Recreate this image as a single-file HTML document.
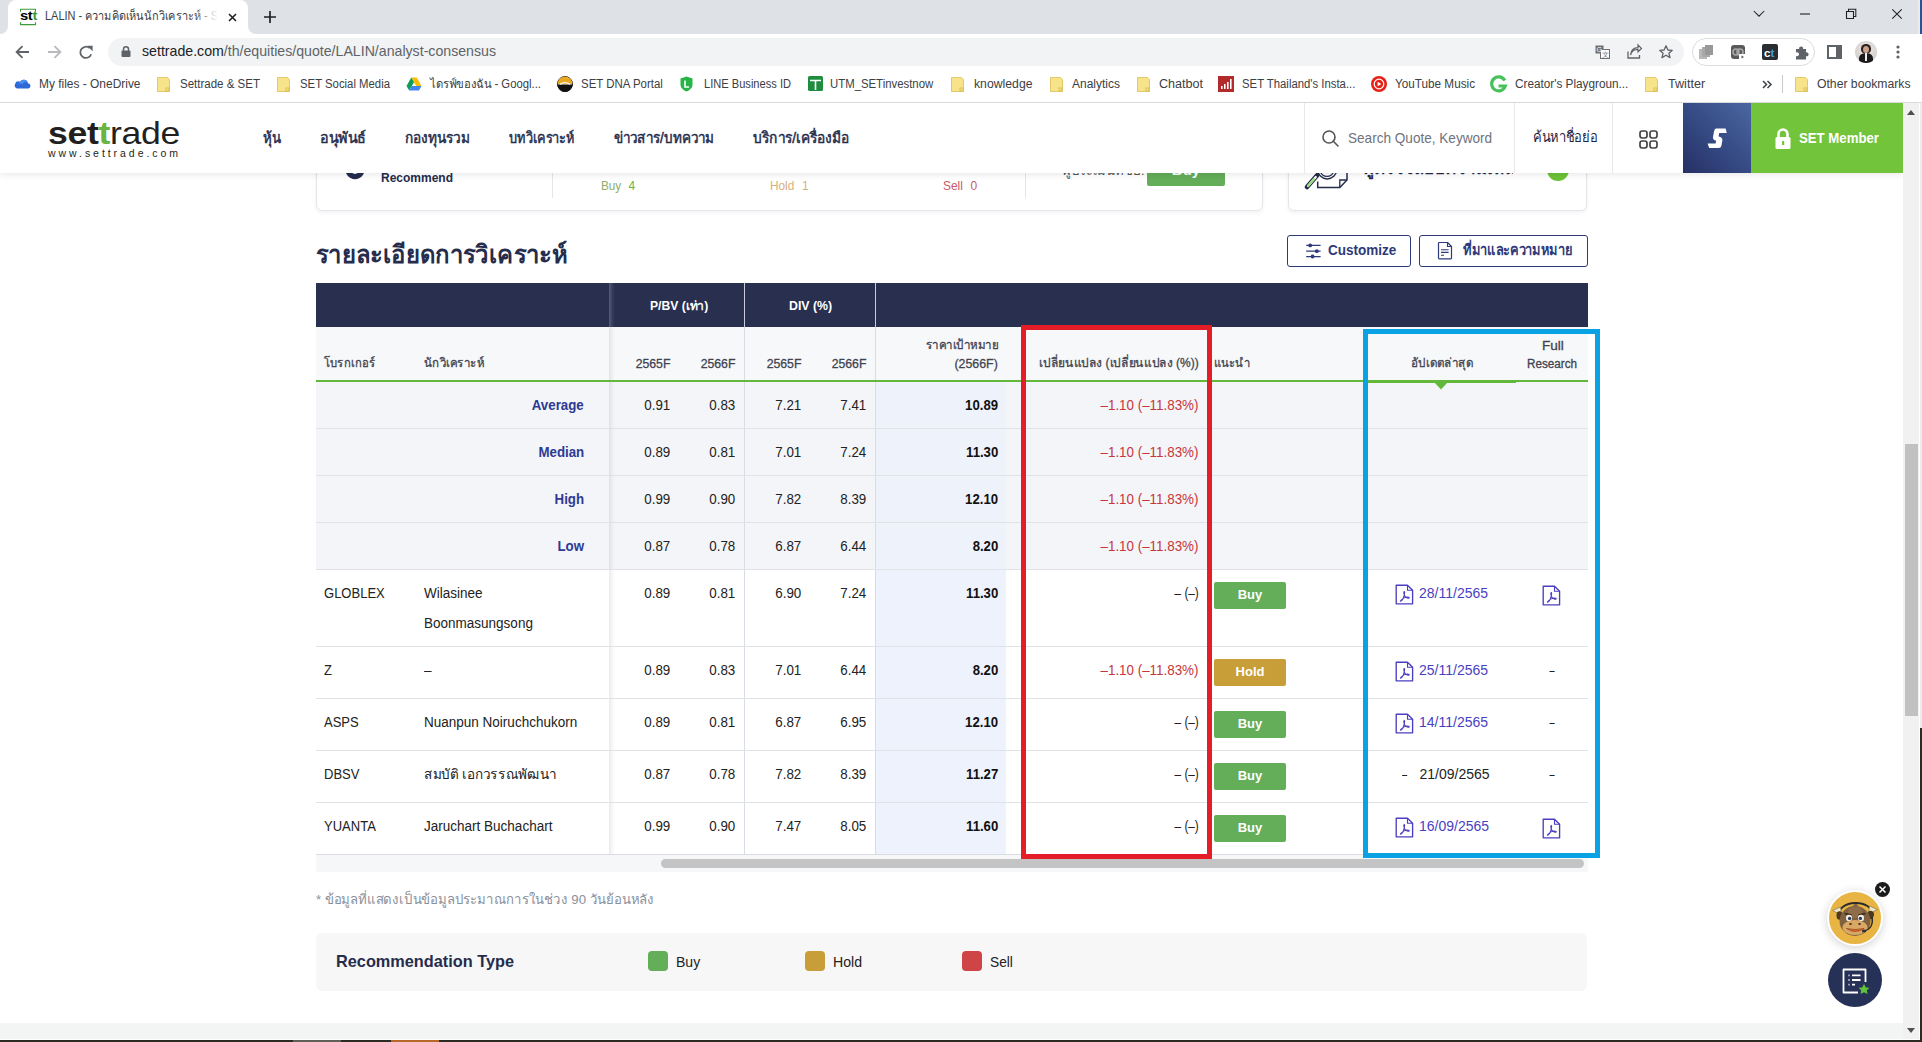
<!DOCTYPE html>
<html><head><meta charset="utf-8">
<style>
*{box-sizing:border-box;margin:0;padding:0}
html,body{width:1922px;height:1042px;overflow:hidden;background:#fff;font-family:"Liberation Sans",sans-serif;}
body{position:relative}
.a{position:absolute;white-space:nowrap}
svg.a{overflow:visible}
</style></head><body>
<div class="a" style="left:0px;top:0px;width:1922px;height:34px;background:#dee1e6;"></div><div class="a" style="left:0px;top:26px;width:8px;height:8px;background:#fff;"></div><div class="a" style="left:-8px;top:18px;width:16px;height:16px;background:#dee1e6;border-radius:50%"></div><div class="a" style="left:248px;top:26px;width:8px;height:8px;background:#fff;"></div><div class="a" style="left:248px;top:18px;width:16px;height:16px;background:#dee1e6;border-radius:50%"></div><div class="a" style="left:8px;top:0px;width:240px;height:34px;background:#fff;border-radius:8px 8px 0 0"></div><svg class="a" style="left:19px;top:8px;" width="18" height="18" viewBox="0 0 18 18"><path d="M1.5 3.8V1.3H16.5V3.8M1.5 14.2V16.6H16.5V14.2" fill="none" stroke="#3d9a35" stroke-width="1.1" stroke-linejoin="round"/></svg><div class="a " style="top:8.86px;font-size:12.5px;line-height:15.62px;color:#000;font-weight:bold;left:19.8px;transform:scaleX(1.1813);transform-origin:left center;letter-spacing:-0.3px"><span style="color:#000">st</span><span style="color:#3d9a35">t</span></div><div class="a" style="left:44px;top:0;width:174px;height:34px;overflow:hidden"><div class="a " style="top:9.36px;font-size:12.5px;line-height:15.62px;color:#3c4043;font-weight:normal;left:0.5px;transform:scaleX(0.8768);transform-origin:left center;">LALIN - ความคิดเห็นนักวิเคราะห์ - SET</div><div class="a" style="left:150px;top:0px;width:24px;height:34px;background:linear-gradient(90deg,rgba(255,255,255,0),#fff);"></div></div><svg class="a" style="left:228px;top:13px;" width="9" height="9" viewBox="0 0 9 9"><path d="M1 1L8 8M8 1L1 8" stroke="#202124" stroke-width="1.6"/></svg><svg class="a" style="left:264px;top:11px;" width="12" height="12" viewBox="0 0 12 12"><path d="M6 0V12M0 6H12" stroke="#202124" stroke-width="1.7"/></svg><svg class="a" style="left:1753px;top:10px;" width="12" height="8" viewBox="0 0 12 8"><path d="M0.8 1L6 6.2L11.2 1" fill="none" stroke="#202124" stroke-width="1.05"/></svg><svg class="a" style="left:1800px;top:13px;" width="10" height="2" viewBox="0 0 10 2"><path d="M0 1H10" stroke="#202124" stroke-width="1.1"/></svg><svg class="a" style="left:1845px;top:8px;" width="12" height="12" viewBox="0 0 12 12"><path d="M1.5 3.5H8.5V10.5H1.5Z" fill="none" stroke="#202124" stroke-width="1.1"/><path d="M3.5 3.2V1.2H10.8V8.5H8.8" fill="none" stroke="#202124" stroke-width="1.05"/></svg><svg class="a" style="left:1892px;top:9px;" width="10" height="10" viewBox="0 0 10 10"><path d="M0.3 0.3L9.7 9.7M9.7 0.3L0.3 9.7" stroke="#202124" stroke-width="1.05"/></svg><div class="a" style="left:1918px;top:0px;width:2px;height:34px;background:#ecebea;"></div><div class="a" style="left:1920px;top:0px;width:2px;height:34px;background:#24549c;"></div><div class="a" style="left:0px;top:34px;width:1922px;height:34px;background:#fff;"></div><svg class="a" style="left:15px;top:45px;" width="15" height="14" viewBox="0 0 15 14"><path d="M14 7H2M7.5 1.2L1.6 7L7.5 12.8" fill="none" stroke="#5f6368" stroke-width="1.8"/></svg><svg class="a" style="left:47px;top:45px;" width="15" height="14" viewBox="0 0 15 14"><path d="M1 7H13M7.5 1.2L13.4 7L7.5 12.8" fill="none" stroke="#b8babd" stroke-width="1.8"/></svg><svg class="a" style="left:79px;top:45px;" width="15" height="15" viewBox="0 0 15 15"><path d="M12.2 9.2A5.6 5.6 0 1 1 10.6 3.1" fill="none" stroke="#5f6368" stroke-width="1.8"/><path d="M8.2 0.8H13.6V6.2Z" fill="#5f6368"/></svg><div class="a" style="left:108px;top:38px;width:1576px;height:28px;background:#f1f3f4;border-radius:14px"></div><svg class="a" style="left:121px;top:46px;" width="10" height="11" viewBox="0 0 10 11"><rect x="0.5" y="4.5" width="9" height="6.5" rx="1" fill="#5f6368"/><path d="M2.5 5V3.3A2.5 2.5 0 0 1 7.5 3.3V5" fill="none" stroke="#5f6368" stroke-width="1.5"/></svg><div class="a " style="top:43.44px;font-size:14.16px;line-height:17.7px;color:#5f6368;font-weight:normal;left:142px;transform:scaleX(0.9997);transform-origin:left center;"><span style="color:#202124">settrade.com</span>/th/equities/quote/LALIN/analyst-consensus</div><svg class="a" style="left:1595px;top:45px;" width="15" height="14" viewBox="0 0 15 14"><rect x="0.5" y="0.5" width="8" height="8" fill="#6d7175"/><rect x="5.5" y="4.5" width="9" height="9" fill="#fff" stroke="#6d7175"/><text x="1.6" y="7.3" font-size="7" fill="#fff" font-family="Liberation Sans">G</text><text x="7.2" y="12" font-size="7" fill="#6d7175" font-family="Liberation Sans">文</text></svg><svg class="a" style="left:1627px;top:45px;" width="15" height="14" viewBox="0 0 15 14"><path d="M1 6.5V13H12.5V10" fill="none" stroke="#5f6368" stroke-width="1.3"/><path d="M3.5 10C4.5 6 8 4.3 11 4.3V6.8L14.5 3.4L11 0V2.6C7 2.6 4 5.5 3.5 10Z" fill="none" stroke="#5f6368" stroke-width="1.2"/></svg><svg class="a" style="left:1659px;top:45px;" width="14" height="14" viewBox="0 0 14 14"><path d="M7 0.8L8.9 5L13.3 5.3L9.9 8.2L11 12.6L7 10.2L3 12.6L4.1 8.2L0.7 5.3L5.1 5Z" fill="none" stroke="#5f6368" stroke-width="1.3" stroke-linejoin="round"/></svg><div class="a" style="left:1692px;top:38px;width:123px;height:28px;background:#fff;border:1px solid #dadce0;border-radius:14px"></div><svg class="a" style="left:1699px;top:45px;" width="14" height="14" viewBox="0 0 14 14"><rect x="0" y="4" width="8" height="10" fill="#b9b9b9"/><rect x="3" y="2" width="8" height="10" fill="#a9a9a9"/><rect x="6" y="0" width="8" height="10" fill="#999"/></svg><svg class="a" style="left:1731px;top:45px;" width="15" height="15" viewBox="0 0 15 15"><rect x="0" y="0" width="14" height="14" rx="3" fill="#5a5a5a"/><circle cx="5" cy="7" r="3" fill="none" stroke="#aaa" stroke-width="1.5"/><circle cx="9" cy="7" r="3" fill="none" stroke="#aaa" stroke-width="1.5"/><rect x="8" y="9" width="7" height="6" rx="1" fill="#fff"/><path d="M10.5 10.5L13 12L10.5 13.5Z" fill="#555"/></svg><div class="a" style="left:1762px;top:44px;width:16px;height:16px;background:#2a2e33;border-radius:2px"></div><div class="a " style="top:45.83px;font-size:11.5px;line-height:14.38px;color:#fff;font-weight:bold;left:1764px;">c<span style="color:#3aa0e0">t</span></div><svg class="a" style="left:1794px;top:45px;" width="16" height="15" viewBox="0 0 16 15"><path d="M2 4H5.2A2 2 0 1 1 9 4H12V7.4A2 2 0 1 1 12 11.2V14.5H2V11A2 2 0 1 0 2 7.6Z" fill="#5f6368"/></svg><svg class="a" style="left:1827px;top:45px;" width="15" height="14" viewBox="0 0 15 14"><rect x="1" y="1" width="13" height="12" fill="none" stroke="#5f6368" stroke-width="2"/><rect x="9" y="1" width="5" height="12" fill="#5f6368"/></svg><div class="a" style="left:1855px;top:41px;width:22px;height:22px;border-radius:50%;background:radial-gradient(circle at 50% 40%,#f0ebe8 0,#d9d4d1 60%,#c9c4c2 100%);overflow:hidden"><div style="position:absolute;left:6px;top:3px;width:10px;height:9px;border-radius:50% 50% 40% 40%;background:#2a211c"></div><div style="position:absolute;left:8px;top:5px;width:6px;height:7px;border-radius:50%;background:#caa28a"></div><div style="position:absolute;left:4px;top:12px;width:14px;height:12px;border-radius:45% 45% 0 0;background:#1c1a1a"></div><div style="position:absolute;left:10px;top:12px;width:2px;height:8px;background:#eee"></div></div><svg class="a" style="left:1896px;top:45px;" width="4" height="14" viewBox="0 0 4 14"><circle cx="2" cy="2" r="1.6" fill="#5f6368"/><circle cx="2" cy="7" r="1.6" fill="#5f6368"/><circle cx="2" cy="12" r="1.6" fill="#5f6368"/></svg><div class="a" style="left:0px;top:68px;width:1922px;height:34px;background:#fff;"></div><div class="a" style="left:0px;top:102px;width:1922px;height:1px;background:#d9dbdf;"></div><svg class="a" style="left:13px;top:78px;" width="18" height="11" viewBox="0 0 18 11"><path d="M4 10.5H15.5A2.7 2.7 0 0 0 15 5.2A4.4 4.4 0 0 0 7 3.8A3.4 3.4 0 0 0 4 10.5Z" fill="#2d6ad8"/><path d="M7 3.8A4.4 4.4 0 0 1 15 5.2A3 3 0 0 0 9.5 6.5A3.5 3.5 0 0 0 4.2 7Z" fill="#4d8ff0"/></svg><div class="a " style="top:76.84px;font-size:12px;line-height:15.0px;color:#3c4043;font-weight:normal;left:38.5px;transform:scaleX(0.9948);transform-origin:left center;">My files - OneDrive</div><svg class="a" style="left:157px;top:77px;" width="13" height="15" viewBox="0 0 13 15"><path d="M0.5 0.5H10.5L12.5 2.5V14.5H0.5Z" fill="#f6e38a" stroke="#e3c96a" stroke-width="1"/><rect x="9" y="11" width="3" height="3" fill="none" stroke="#d8b949" stroke-width="0.8"/></svg><div class="a " style="top:76.84px;font-size:12px;line-height:15.0px;color:#3c4043;font-weight:normal;left:180px;transform:scaleX(0.9595);transform-origin:left center;">Settrade &amp; SET</div><svg class="a" style="left:277px;top:77px;" width="13" height="15" viewBox="0 0 13 15"><path d="M0.5 0.5H10.5L12.5 2.5V14.5H0.5Z" fill="#f6e38a" stroke="#e3c96a" stroke-width="1"/><rect x="9" y="11" width="3" height="3" fill="none" stroke="#d8b949" stroke-width="0.8"/></svg><div class="a " style="top:76.84px;font-size:12px;line-height:15.0px;color:#3c4043;font-weight:normal;left:300px;transform:scaleX(0.9458);transform-origin:left center;">SET Social Media</div><svg class="a" style="left:406px;top:77px;" width="16" height="14" viewBox="0 0 16 14"><path d="M5.3 0.5H10.7L15.5 9H10.2Z" fill="#fbbc04"/><path d="M5.3 0.5L0.5 9L3.2 13.5L8 5.2Z" fill="#0f9d58"/><path d="M3.2 13.5H13L15.5 9H5.7Z" fill="#4285f4"/></svg><div class="a " style="top:76.84px;font-size:12px;line-height:15.0px;color:#3c4043;font-weight:normal;left:430px;transform:scaleX(0.9432);transform-origin:left center;">ไดรฟ์ของฉัน - Googl...</div><svg class="a" style="left:557px;top:76px;" width="16" height="16" viewBox="0 0 16 16"><circle cx="8" cy="8" r="7.5" fill="#fff" stroke="#111" stroke-width="1"/><path d="M0.5 8A7.5 7.5 0 0 1 15.5 8Z" fill="#e9a824"/><path d="M0.5 8.5H15.5A7.5 7.5 0 0 1 0.5 8.5Z" fill="#111"/><path d="M3 8.2Q8 5 13 8.2" fill="none" stroke="#fff" stroke-width="1.2"/></svg><div class="a " style="top:76.84px;font-size:12px;line-height:15.0px;color:#3c4043;font-weight:normal;left:581.2px;transform:scaleX(0.9532);transform-origin:left center;">SET DNA Portal</div><svg class="a" style="left:680px;top:76px;" width="13" height="16" viewBox="0 0 13 16"><path d="M6.5 0.5L12.5 2.5V8.5C12.5 12 9.5 14.3 6.5 15.5C3.5 14.3 0.5 12 0.5 8.5V2.5Z" fill="#28b446"/><path d="M5 4.5V11H9" fill="none" stroke="#fff" stroke-width="1.6"/></svg><div class="a " style="top:76.84px;font-size:12px;line-height:15.0px;color:#3c4043;font-weight:normal;left:703.5px;transform:scaleX(0.9251);transform-origin:left center;">LINE Business ID</div><svg class="a" style="left:808px;top:76px;" width="15" height="15" viewBox="0 0 15 15"><rect x="0" y="0" width="15" height="15" rx="1.5" fill="#1e8e3e"/><path d="M2 4.5H13M7.5 4.5V14" stroke="#fff" stroke-width="1.6"/></svg><div class="a " style="top:76.84px;font-size:12px;line-height:15.0px;color:#3c4043;font-weight:normal;left:830.3px;transform:scaleX(0.9475);transform-origin:left center;">UTM_SETinvestnow</div><svg class="a" style="left:951px;top:77px;" width="13" height="15" viewBox="0 0 13 15"><path d="M0.5 0.5H10.5L12.5 2.5V14.5H0.5Z" fill="#f6e38a" stroke="#e3c96a" stroke-width="1"/><rect x="9" y="11" width="3" height="3" fill="none" stroke="#d8b949" stroke-width="0.8"/></svg><div class="a " style="top:76.84px;font-size:12px;line-height:15.0px;color:#3c4043;font-weight:normal;left:973.5px;transform:scaleX(1.0196);transform-origin:left center;">knowledge</div><svg class="a" style="left:1050px;top:77px;" width="13" height="15" viewBox="0 0 13 15"><path d="M0.5 0.5H10.5L12.5 2.5V14.5H0.5Z" fill="#f6e38a" stroke="#e3c96a" stroke-width="1"/><rect x="9" y="11" width="3" height="3" fill="none" stroke="#d8b949" stroke-width="0.8"/></svg><div class="a " style="top:76.84px;font-size:12px;line-height:15.0px;color:#3c4043;font-weight:normal;left:1072px;transform:scaleX(0.9993);transform-origin:left center;">Analytics</div><svg class="a" style="left:1137px;top:77px;" width="13" height="15" viewBox="0 0 13 15"><path d="M0.5 0.5H10.5L12.5 2.5V14.5H0.5Z" fill="#f6e38a" stroke="#e3c96a" stroke-width="1"/><rect x="9" y="11" width="3" height="3" fill="none" stroke="#d8b949" stroke-width="0.8"/></svg><div class="a " style="top:76.84px;font-size:12px;line-height:15.0px;color:#3c4043;font-weight:normal;left:1159px;transform:scaleX(1.0468);transform-origin:left center;">Chatbot</div><svg class="a" style="left:1218px;top:76px;" width="16" height="16" viewBox="0 0 16 16"><rect x="0" y="0" width="16" height="16" fill="#b22a2a"/><rect x="3" y="10" width="1.6" height="3" fill="#fff"/><rect x="6" y="8" width="1.6" height="5" fill="#fff"/><rect x="9" y="6" width="1.6" height="7" fill="#fff"/><rect x="12" y="3" width="1.6" height="10" fill="#fff"/></svg><div class="a " style="top:76.84px;font-size:12px;line-height:15.0px;color:#3c4043;font-weight:normal;left:1242px;transform:scaleX(0.9456);transform-origin:left center;">SET Thailand's Insta...</div><svg class="a" style="left:1371px;top:76px;" width="16" height="16" viewBox="0 0 16 16"><circle cx="8" cy="8" r="8" fill="#e62117"/><circle cx="8" cy="8" r="4.8" fill="none" stroke="#fff" stroke-width="1.2"/><path d="M6.6 5.8L10.4 8L6.6 10.2Z" fill="#fff"/></svg><div class="a " style="top:76.84px;font-size:12px;line-height:15.0px;color:#3c4043;font-weight:normal;left:1395px;transform:scaleX(0.9777);transform-origin:left center;">YouTube Music</div><svg class="a" style="left:1490px;top:76px;" width="17" height="17" viewBox="0 0 17 17"><path d="M14.8 4.5A7 7 0 1 0 15.3 10H8.5" fill="none" stroke="#47c25a" stroke-width="3.2"/></svg><div class="a " style="top:76.84px;font-size:12px;line-height:15.0px;color:#3c4043;font-weight:normal;left:1514.6px;transform:scaleX(0.9802);transform-origin:left center;">Creator's Playgroun...</div><svg class="a" style="left:1645px;top:77px;" width="13" height="15" viewBox="0 0 13 15"><path d="M0.5 0.5H10.5L12.5 2.5V14.5H0.5Z" fill="#f6e38a" stroke="#e3c96a" stroke-width="1"/><rect x="9" y="11" width="3" height="3" fill="none" stroke="#d8b949" stroke-width="0.8"/></svg><div class="a " style="top:76.84px;font-size:12px;line-height:15.0px;color:#3c4043;font-weight:normal;left:1667.7px;transform:scaleX(1.0497);transform-origin:left center;">Twitter</div><svg class="a" style="left:1762px;top:80px;" width="10" height="9" viewBox="0 0 10 9"><path d="M1 1L4.5 4.5L1 8M5.5 1L9 4.5L5.5 8" fill="none" stroke="#3c4043" stroke-width="1.5"/></svg><div class="a" style="left:1782px;top:75px;width:1px;height:18px;background:#c7c9cc;"></div><svg class="a" style="left:1795px;top:77px;" width="13" height="15" viewBox="0 0 13 15"><path d="M0.5 0.5H10.5L12.5 2.5V14.5H0.5Z" fill="#f6e38a" stroke="#e3c96a" stroke-width="1"/><rect x="9" y="11" width="3" height="3" fill="none" stroke="#d8b949" stroke-width="0.8"/></svg><div class="a " style="top:76.84px;font-size:12px;line-height:15.0px;color:#3c4043;font-weight:normal;left:1817px;transform:scaleX(1.0158);transform-origin:left center;">Other bookmarks</div><div class="a" style="left:316px;top:150px;width:947px;height:61px;background:#fff;border:1px solid #e3e6ea;border-radius:6px;box-shadow:0 2px 4px rgba(30,40,70,.06)"></div><div class="a" style="left:552px;top:172px;width:1px;height:26px;background:#e3e6ea;"></div><div class="a" style="left:1025px;top:172px;width:1px;height:26px;background:#e3e6ea;"></div><svg class="a" style="left:345px;top:161px;" width="20" height="20" viewBox="0 0 20 20"><path d="M2.3 7A7.7 8.6 0 0 0 17.7 7" fill="none" stroke="#252c4c" stroke-width="5.2"/></svg><div class="a " style="top:170.18px;font-size:13.5px;line-height:16.88px;color:#252c4c;font-weight:bold;left:381.4px;transform:scaleX(0.8885);transform-origin:left center;">Recommend</div><div class="a " style="top:179.34px;font-size:12px;line-height:15.0px;color:#8fae6a;font-weight:normal;left:601.2px;transform:scaleX(0.9764);transform-origin:left center;">Buy</div><div class="a " style="top:179.34px;font-size:12px;line-height:15.0px;color:#6cb24a;font-weight:normal;left:628.5px;">4</div><div class="a " style="top:179.34px;font-size:12px;line-height:15.0px;color:#d8b07a;font-weight:normal;left:769.7px;transform:scaleX(0.9843);transform-origin:left center;">Hold</div><div class="a " style="top:179.34px;font-size:12px;line-height:15.0px;color:#d8b07a;font-weight:normal;left:802px;">1</div><div class="a " style="top:179.34px;font-size:12px;line-height:15.0px;color:#c75a6a;font-weight:normal;left:943.2px;transform:scaleX(0.9892);transform-origin:left center;">Sell</div><div class="a " style="top:179.34px;font-size:12px;line-height:15.0px;color:#c75a6a;font-weight:normal;left:970.5px;">0</div><div class="a " style="top:163.37px;font-size:13px;line-height:16.25px;color:#555;font-weight:normal;left:1063px;">ผู้ประเมินที่ซื้อ:</div><div class="a" style="left:1147px;top:155px;width:78px;height:31px;background:#64ad59;border-radius:2px"></div><div class="a " style="top:161.43px;font-size:15px;line-height:18.75px;color:#fff;font-weight:bold;left:886px;width:600px;text-align:center;">Buy</div><div class="a" style="left:1288px;top:150px;width:299px;height:61px;background:#fff;border:1px solid #e3e6ea;border-radius:6px;box-shadow:0 2px 4px rgba(30,40,70,.06)"></div><svg class="a" style="left:1300px;top:150px;" width="50" height="40" viewBox="0 0 50 40"><circle cx="27.2" cy="19.3" r="9.6" fill="none" stroke="#252c4c" stroke-width="1.5"/><path d="M20.5 22A7 7 0 0 0 33.5 22" fill="none" stroke="#252c4c" stroke-width="1.2"/><path d="M17.2 25.2L7 37" stroke="#252c4c" stroke-width="4.6" stroke-linecap="round"/><path d="M15.8 27L8 36" stroke="#fff" stroke-width="2.2" stroke-linecap="round"/><path d="M14 29L8 36" stroke="#9be07a" stroke-width="2" stroke-linecap="round"/><path d="M17.7 31.5V37.4H39.8L47 30V10" fill="none" stroke="#252c4c" stroke-width="1.5"/><path d="M39.8 37.4V30H47" fill="none" stroke="#252c4c" stroke-width="1.3"/></svg><div class="a" style="left:1360px;top:150px;width:153px;height:40px;overflow:hidden"><div class="a " style="top:8.48px;font-size:17px;line-height:21.25px;color:#252c4c;font-weight:bold;left:4px;">ผู้ตรวจสอบความเห็นนักวิเคราะห์</div></div><div class="a" style="left:1547px;top:159px;width:22px;height:22px;background:#6cc236;border-radius:50%"></div><div class="a " style="top:238.51px;font-size:25px;line-height:31.25px;color:#252c4c;font-weight:bold;left:316px;transform:scaleX(0.9544);transform-origin:left center;">รายละเอียดการวิเคราะห์</div><div class="a" style="left:1287px;top:235px;width:124px;height:32px;background:#fff;border:1px solid #2e3a78;border-radius:3px"></div><svg class="a" style="left:1305px;top:243px;" width="17" height="16" viewBox="0 0 17 16"><path d="M1.2 2.4H15.6M1.2 8.2H15.6M1.2 13.5H15.6" stroke="#2e3a78" stroke-width="1.25"/><circle cx="5.2" cy="2.4" r="1.9" fill="#2e3a78"/><circle cx="11.8" cy="8.2" r="1.9" fill="#2e3a78"/><circle cx="7.6" cy="13.5" r="1.9" fill="#2e3a78"/></svg><div class="a " style="top:240.92px;font-size:14.5px;line-height:18.12px;color:#2e3a78;font-weight:bold;left:1327.7px;transform:scaleX(0.9314);transform-origin:left center;">Customize</div><div class="a" style="left:1419px;top:235px;width:169px;height:32px;background:#fff;border:1px solid #2e3a78;border-radius:3px"></div><svg class="a" style="left:1437px;top:241px;" width="16" height="19" viewBox="0 0 16 19"><path d="M2.3 1.5H10.5L14.5 5.5V17Q14.5 17.8 13.7 17.8H2.3Q1.5 17.8 1.5 17V2.3Q1.5 1.5 2.3 1.5Z" fill="none" stroke="#2e3a78" stroke-width="1.2" stroke-linejoin="round"/><path d="M10.5 1.5V5.5H14.5" fill="none" stroke="#2e3a78" stroke-width="1.1"/><path d="M4 8.8H11.6M4 11.4H11.6M4 14.3H7" stroke="#2e3a78" stroke-width="1.1"/></svg><div class="a " style="top:240.93px;font-size:15px;line-height:18.75px;color:#2e3a78;font-weight:bold;left:1462.5px;transform:scaleX(0.8555);transform-origin:left center;">ที่มาและความหมาย</div><div class="a" style="left:316px;top:283px;width:1272px;height:44px;background:#282f4f;"></div><div class="a" style="left:316px;top:327px;width:1272px;height:53px;background:#f7f8fa;"></div><div class="a" style="left:316px;top:382px;width:1272px;height:187px;background:#f3f5f8;"></div><div class="a" style="left:316px;top:569px;width:1272px;height:285px;background:#fff;"></div><div class="a" style="left:876px;top:382px;width:130px;height:187px;background:#eef2fa;"></div><div class="a" style="left:876px;top:569px;width:130px;height:285px;background:#eef2fc;"></div><div class="a" style="left:744px;top:283px;width:1px;height:571px;background:#d9dce2;"></div><div class="a" style="left:875px;top:283px;width:1px;height:571px;background:#d9dce2;"></div><div class="a" style="left:744px;top:283px;width:1px;height:44px;background:#c9ccd6;"></div><div class="a" style="left:875px;top:283px;width:1px;height:44px;background:#c9ccd6;"></div><div class="a" style="left:609px;top:327px;width:6px;height:527px;background:linear-gradient(90deg,rgba(0,0,0,.085),rgba(0,0,0,.03) 50%,rgba(0,0,0,0));"></div><div class="a" style="left:609px;top:283px;width:6px;height:44px;background:linear-gradient(90deg,rgba(255,255,255,.22),rgba(255,255,255,.08) 50%,rgba(255,255,255,0));"></div><div class="a" style="left:316px;top:428px;width:1272px;height:1px;background:#dfe2e7;"></div><div class="a" style="left:316px;top:475px;width:1272px;height:1px;background:#dfe2e7;"></div><div class="a" style="left:316px;top:522px;width:1272px;height:1px;background:#dfe2e7;"></div><div class="a" style="left:316px;top:569px;width:1272px;height:1px;background:#dfe2e7;"></div><div class="a" style="left:316px;top:646px;width:1272px;height:1px;background:#dfe2e7;"></div><div class="a" style="left:316px;top:698px;width:1272px;height:1px;background:#dfe2e7;"></div><div class="a" style="left:316px;top:750px;width:1272px;height:1px;background:#dfe2e7;"></div><div class="a" style="left:316px;top:802px;width:1272px;height:1px;background:#dfe2e7;"></div><div class="a" style="left:316px;top:854px;width:1272px;height:1px;background:#d9dce2;"></div><div class="a" style="left:316px;top:380px;width:1272px;height:2px;background:#62b83a;"></div><div class="a" style="left:1368px;top:380px;width:148px;height:3px;background:#62b83a;"></div><svg class="a" style="left:1434px;top:382px;" width="14" height="8" viewBox="0 0 14 8"><path d="M0 0H14L7 7.5Z" fill="#62b83a"/></svg><div class="a " style="top:298.66px;font-size:12.5px;line-height:15.62px;color:#fff;font-weight:bold;left:649.8px;transform:scaleX(0.9719);transform-origin:left center;">P/BV (เท่า)</div><div class="a " style="top:298.66px;font-size:12.5px;line-height:15.62px;color:#fff;font-weight:bold;left:788.6px;transform:scaleX(0.9851);transform-origin:left center;">DIV (%)</div><div class="a " style="top:356.36px;font-size:12.5px;line-height:15.62px;color:#3f4450;font-weight:normal;left:323.5px;transform:scaleX(0.8982);transform-origin:left center;-webkit-text-stroke:0.3px #3f4450">โบรกเกอร์</div><div class="a " style="top:356.36px;font-size:12.5px;line-height:15.62px;color:#3f4450;font-weight:normal;left:423.7px;transform:scaleX(0.9231);transform-origin:left center;-webkit-text-stroke:0.3px #3f4450">นักวิเคราะห์</div><div class="a " style="top:357.06px;font-size:12.5px;line-height:15.62px;color:#3f4450;font-weight:normal;right:1251.5px;text-align:right;transform:scaleX(0.9816);transform-origin:right center;-webkit-text-stroke:0.3px #3f4450">2565F</div><div class="a " style="top:357.06px;font-size:12.5px;line-height:15.62px;color:#3f4450;font-weight:normal;right:1186.5px;text-align:right;transform:scaleX(0.9816);transform-origin:right center;-webkit-text-stroke:0.3px #3f4450">2566F</div><div class="a " style="top:357.06px;font-size:12.5px;line-height:15.62px;color:#3f4450;font-weight:normal;right:1120.5px;text-align:right;transform:scaleX(0.9816);transform-origin:right center;-webkit-text-stroke:0.3px #3f4450">2565F</div><div class="a " style="top:357.06px;font-size:12.5px;line-height:15.62px;color:#3f4450;font-weight:normal;right:1055.5px;text-align:right;transform:scaleX(0.9816);transform-origin:right center;-webkit-text-stroke:0.3px #3f4450">2566F</div><div class="a " style="top:338.36px;font-size:12.5px;line-height:15.62px;color:#3f4450;font-weight:normal;right:924px;text-align:right;transform:scaleX(0.9282);transform-origin:right center;-webkit-text-stroke:0.3px #3f4450">ราคาเป้าหมาย</div><div class="a " style="top:357.06px;font-size:12.5px;line-height:15.62px;color:#3f4450;font-weight:normal;right:924px;text-align:right;transform:scaleX(0.9890);transform-origin:right center;-webkit-text-stroke:0.3px #3f4450">(2566F)</div><div class="a " style="top:356.36px;font-size:12.5px;line-height:15.62px;color:#3f4450;font-weight:normal;right:723.5px;text-align:right;transform:scaleX(0.9579);transform-origin:right center;-webkit-text-stroke:0.3px #3f4450">เปลี่ยนแปลง (เปลี่ยนแปลง (%))</div><div class="a " style="top:356.36px;font-size:12.5px;line-height:15.62px;color:#3f4450;font-weight:normal;left:1214.4px;transform:scaleX(0.8950);transform-origin:left center;-webkit-text-stroke:0.3px #3f4450">แนะนำ</div><div class="a " style="top:356.36px;font-size:12.5px;line-height:15.62px;color:#3f4450;font-weight:normal;left:1410.7px;transform:scaleX(0.9299);transform-origin:left center;-webkit-text-stroke:0.3px #3f4450">อัปเดตล่าสุด</div><div class="a " style="top:339.06px;font-size:12.5px;line-height:15.62px;color:#3f4450;font-weight:normal;left:1541.7px;transform:scaleX(1.0816);transform-origin:left center;-webkit-text-stroke:0.3px #3f4450">Full</div><div class="a " style="top:357.06px;font-size:12.5px;line-height:15.62px;color:#3f4450;font-weight:normal;left:1527.3px;transform:scaleX(0.9346);transform-origin:left center;-webkit-text-stroke:0.3px #3f4450">Research</div><div class="a " style="top:396.90px;font-size:14px;line-height:17.5px;color:#2e3a94;font-weight:bold;right:1338px;text-align:right;transform:scaleX(0.95);transform-origin:right center;">Average</div><div class="a " style="top:396.90px;font-size:14px;line-height:17.5px;color:#222;font-weight:normal;right:1252px;text-align:right;transform:scaleX(0.955);transform-origin:right center;">0.91</div><div class="a " style="top:396.90px;font-size:14px;line-height:17.5px;color:#222;font-weight:normal;right:1187px;text-align:right;transform:scaleX(0.955);transform-origin:right center;">0.83</div><div class="a " style="top:396.90px;font-size:14px;line-height:17.5px;color:#222;font-weight:normal;right:1121px;text-align:right;transform:scaleX(0.955);transform-origin:right center;">7.21</div><div class="a " style="top:396.90px;font-size:14px;line-height:17.5px;color:#222;font-weight:normal;right:1056px;text-align:right;transform:scaleX(0.955);transform-origin:right center;">7.41</div><div class="a " style="top:396.90px;font-size:14px;line-height:17.5px;color:#111;font-weight:bold;right:924px;text-align:right;transform:scaleX(0.94);transform-origin:right center;">10.89</div><div class="a " style="top:396.90px;font-size:14px;line-height:17.5px;color:#c8363b;font-weight:normal;right:723.5px;text-align:right;transform:scaleX(0.9562);transform-origin:right center;">–1.10 (–11.83%)</div><div class="a " style="top:443.90px;font-size:14px;line-height:17.5px;color:#2e3a94;font-weight:bold;right:1338px;text-align:right;transform:scaleX(0.95);transform-origin:right center;">Median</div><div class="a " style="top:443.90px;font-size:14px;line-height:17.5px;color:#222;font-weight:normal;right:1252px;text-align:right;transform:scaleX(0.955);transform-origin:right center;">0.89</div><div class="a " style="top:443.90px;font-size:14px;line-height:17.5px;color:#222;font-weight:normal;right:1187px;text-align:right;transform:scaleX(0.955);transform-origin:right center;">0.81</div><div class="a " style="top:443.90px;font-size:14px;line-height:17.5px;color:#222;font-weight:normal;right:1121px;text-align:right;transform:scaleX(0.955);transform-origin:right center;">7.01</div><div class="a " style="top:443.90px;font-size:14px;line-height:17.5px;color:#222;font-weight:normal;right:1056px;text-align:right;transform:scaleX(0.955);transform-origin:right center;">7.24</div><div class="a " style="top:443.90px;font-size:14px;line-height:17.5px;color:#111;font-weight:bold;right:924px;text-align:right;transform:scaleX(0.94);transform-origin:right center;">11.30</div><div class="a " style="top:443.90px;font-size:14px;line-height:17.5px;color:#c8363b;font-weight:normal;right:723.5px;text-align:right;transform:scaleX(0.9562);transform-origin:right center;">–1.10 (–11.83%)</div><div class="a " style="top:490.90px;font-size:14px;line-height:17.5px;color:#2e3a94;font-weight:bold;right:1338px;text-align:right;transform:scaleX(0.95);transform-origin:right center;">High</div><div class="a " style="top:490.90px;font-size:14px;line-height:17.5px;color:#222;font-weight:normal;right:1252px;text-align:right;transform:scaleX(0.955);transform-origin:right center;">0.99</div><div class="a " style="top:490.90px;font-size:14px;line-height:17.5px;color:#222;font-weight:normal;right:1187px;text-align:right;transform:scaleX(0.955);transform-origin:right center;">0.90</div><div class="a " style="top:490.90px;font-size:14px;line-height:17.5px;color:#222;font-weight:normal;right:1121px;text-align:right;transform:scaleX(0.955);transform-origin:right center;">7.82</div><div class="a " style="top:490.90px;font-size:14px;line-height:17.5px;color:#222;font-weight:normal;right:1056px;text-align:right;transform:scaleX(0.955);transform-origin:right center;">8.39</div><div class="a " style="top:490.90px;font-size:14px;line-height:17.5px;color:#111;font-weight:bold;right:924px;text-align:right;transform:scaleX(0.94);transform-origin:right center;">12.10</div><div class="a " style="top:490.90px;font-size:14px;line-height:17.5px;color:#c8363b;font-weight:normal;right:723.5px;text-align:right;transform:scaleX(0.9562);transform-origin:right center;">–1.10 (–11.83%)</div><div class="a " style="top:537.90px;font-size:14px;line-height:17.5px;color:#2e3a94;font-weight:bold;right:1338px;text-align:right;transform:scaleX(0.95);transform-origin:right center;">Low</div><div class="a " style="top:537.90px;font-size:14px;line-height:17.5px;color:#222;font-weight:normal;right:1252px;text-align:right;transform:scaleX(0.955);transform-origin:right center;">0.87</div><div class="a " style="top:537.90px;font-size:14px;line-height:17.5px;color:#222;font-weight:normal;right:1187px;text-align:right;transform:scaleX(0.955);transform-origin:right center;">0.78</div><div class="a " style="top:537.90px;font-size:14px;line-height:17.5px;color:#222;font-weight:normal;right:1121px;text-align:right;transform:scaleX(0.955);transform-origin:right center;">6.87</div><div class="a " style="top:537.90px;font-size:14px;line-height:17.5px;color:#222;font-weight:normal;right:1056px;text-align:right;transform:scaleX(0.955);transform-origin:right center;">6.44</div><div class="a " style="top:537.90px;font-size:14px;line-height:17.5px;color:#111;font-weight:bold;right:924px;text-align:right;transform:scaleX(0.94);transform-origin:right center;">8.20</div><div class="a " style="top:537.90px;font-size:14px;line-height:17.5px;color:#c8363b;font-weight:normal;right:723.5px;text-align:right;transform:scaleX(0.9562);transform-origin:right center;">–1.10 (–11.83%)</div><div class="a " style="top:585.40px;font-size:14px;line-height:17.5px;color:#222;font-weight:normal;left:323.5px;transform:scaleX(0.93);transform-origin:left center;">GLOBLEX</div><div class="a " style="top:585.40px;font-size:14px;line-height:17.5px;color:#222;font-weight:normal;left:423.5px;transform:scaleX(0.965);transform-origin:left center;">Wilasinee</div><div class="a " style="top:615.40px;font-size:14px;line-height:17.5px;color:#222;font-weight:normal;left:423.5px;transform:scaleX(0.965);transform-origin:left center;">Boonmasungsong</div><div class="a " style="top:585.40px;font-size:14px;line-height:17.5px;color:#222;font-weight:normal;right:1252px;text-align:right;transform:scaleX(0.955);transform-origin:right center;">0.89</div><div class="a " style="top:585.40px;font-size:14px;line-height:17.5px;color:#222;font-weight:normal;right:1187px;text-align:right;transform:scaleX(0.955);transform-origin:right center;">0.81</div><div class="a " style="top:585.40px;font-size:14px;line-height:17.5px;color:#222;font-weight:normal;right:1121px;text-align:right;transform:scaleX(0.955);transform-origin:right center;">6.90</div><div class="a " style="top:585.40px;font-size:14px;line-height:17.5px;color:#222;font-weight:normal;right:1056px;text-align:right;transform:scaleX(0.955);transform-origin:right center;">7.24</div><div class="a " style="top:585.40px;font-size:14px;line-height:17.5px;color:#111;font-weight:bold;right:924px;text-align:right;transform:scaleX(0.94);transform-origin:right center;">11.30</div><div class="a " style="top:585.40px;font-size:14px;line-height:17.5px;color:#222;font-weight:normal;right:723.5px;text-align:right;transform:scaleX(0.8404);transform-origin:right center;">– (–)</div><div class="a" style="left:1214px;top:582px;width:72px;height:27px;background:#64ad59;border-radius:2px"></div><div class="a " style="top:587.37px;font-size:13px;line-height:16.25px;color:#fff;font-weight:bold;left:950px;width:600px;text-align:center;">Buy</div><svg class="a" style="left:1395px;top:584px;" width="19" height="21" viewBox="0 0 19 21"><path d="M1.2 1.2H12.5L17.6 6.3V19.8H1.2Z" fill="#fff" stroke="#4a3fc2" stroke-width="1.35" stroke-linejoin="round"/><path d="M12.5 1.2V6.3H17.6" fill="none" stroke="#4a3fc2" stroke-width="1.1"/><path d="M9.3 7.6C8.4 7.6 8.8 10.8 10 12.4C11.2 13.9 13.4 14.4 14.1 14C14.8 13.5 13.1 12.7 10.8 13.3C8.4 13.9 5.6 16.2 5.4 17C5.1 17.9 7 16.7 8.1 14.4C9.1 12.3 10.2 7.6 9.3 7.6Z" fill="none" stroke="#4a3fc2" stroke-width="1.05"/></svg><div class="a " style="top:585.40px;font-size:14px;line-height:17.5px;color:#4a3fc2;font-weight:normal;left:1419px;">28/11/2565</div><svg class="a" style="left:1542px;top:585px;" width="19" height="21" viewBox="0 0 19 21"><path d="M1.2 1.2H12.5L17.6 6.3V19.8H1.2Z" fill="#fff" stroke="#4a3fc2" stroke-width="1.35" stroke-linejoin="round"/><path d="M12.5 1.2V6.3H17.6" fill="none" stroke="#4a3fc2" stroke-width="1.1"/><path d="M9.3 7.6C8.4 7.6 8.8 10.8 10 12.4C11.2 13.9 13.4 14.4 14.1 14C14.8 13.5 13.1 12.7 10.8 13.3C8.4 13.9 5.6 16.2 5.4 17C5.1 17.9 7 16.7 8.1 14.4C9.1 12.3 10.2 7.6 9.3 7.6Z" fill="none" stroke="#4a3fc2" stroke-width="1.05"/></svg><div class="a " style="top:661.90px;font-size:14px;line-height:17.5px;color:#222;font-weight:normal;left:323.5px;transform:scaleX(0.93);transform-origin:left center;">Z</div><div class="a " style="top:661.90px;font-size:14px;line-height:17.5px;color:#222;font-weight:normal;left:423.5px;transform:scaleX(0.965);transform-origin:left center;">–</div><div class="a " style="top:661.90px;font-size:14px;line-height:17.5px;color:#222;font-weight:normal;right:1252px;text-align:right;transform:scaleX(0.955);transform-origin:right center;">0.89</div><div class="a " style="top:661.90px;font-size:14px;line-height:17.5px;color:#222;font-weight:normal;right:1187px;text-align:right;transform:scaleX(0.955);transform-origin:right center;">0.83</div><div class="a " style="top:661.90px;font-size:14px;line-height:17.5px;color:#222;font-weight:normal;right:1121px;text-align:right;transform:scaleX(0.955);transform-origin:right center;">7.01</div><div class="a " style="top:661.90px;font-size:14px;line-height:17.5px;color:#222;font-weight:normal;right:1056px;text-align:right;transform:scaleX(0.955);transform-origin:right center;">6.44</div><div class="a " style="top:661.90px;font-size:14px;line-height:17.5px;color:#111;font-weight:bold;right:924px;text-align:right;transform:scaleX(0.94);transform-origin:right center;">8.20</div><div class="a " style="top:661.90px;font-size:14px;line-height:17.5px;color:#c8363b;font-weight:normal;right:723.5px;text-align:right;transform:scaleX(0.9562);transform-origin:right center;">–1.10 (–11.83%)</div><div class="a" style="left:1214px;top:659px;width:72px;height:27px;background:#c89e38;border-radius:2px"></div><div class="a " style="top:664.37px;font-size:13px;line-height:16.25px;color:#fff;font-weight:bold;left:950px;width:600px;text-align:center;">Hold</div><svg class="a" style="left:1395px;top:660.5px;" width="19" height="21" viewBox="0 0 19 21"><path d="M1.2 1.2H12.5L17.6 6.3V19.8H1.2Z" fill="#fff" stroke="#4a3fc2" stroke-width="1.35" stroke-linejoin="round"/><path d="M12.5 1.2V6.3H17.6" fill="none" stroke="#4a3fc2" stroke-width="1.1"/><path d="M9.3 7.6C8.4 7.6 8.8 10.8 10 12.4C11.2 13.9 13.4 14.4 14.1 14C14.8 13.5 13.1 12.7 10.8 13.3C8.4 13.9 5.6 16.2 5.4 17C5.1 17.9 7 16.7 8.1 14.4C9.1 12.3 10.2 7.6 9.3 7.6Z" fill="none" stroke="#4a3fc2" stroke-width="1.05"/></svg><div class="a " style="top:661.90px;font-size:14px;line-height:17.5px;color:#4a3fc2;font-weight:normal;left:1419px;">25/11/2565</div><div class="a " style="top:661.90px;font-size:14px;line-height:17.5px;color:#222;font-weight:normal;left:1252.4px;width:600px;text-align:center;transform:scaleX(0.65);transform-origin:center center;">–</div><div class="a " style="top:713.90px;font-size:14px;line-height:17.5px;color:#222;font-weight:normal;left:323.5px;transform:scaleX(0.93);transform-origin:left center;">ASPS</div><div class="a " style="top:713.90px;font-size:14px;line-height:17.5px;color:#222;font-weight:normal;left:423.5px;transform:scaleX(0.965);transform-origin:left center;">Nuanpun Noiruchchukorn</div><div class="a " style="top:713.90px;font-size:14px;line-height:17.5px;color:#222;font-weight:normal;right:1252px;text-align:right;transform:scaleX(0.955);transform-origin:right center;">0.89</div><div class="a " style="top:713.90px;font-size:14px;line-height:17.5px;color:#222;font-weight:normal;right:1187px;text-align:right;transform:scaleX(0.955);transform-origin:right center;">0.81</div><div class="a " style="top:713.90px;font-size:14px;line-height:17.5px;color:#222;font-weight:normal;right:1121px;text-align:right;transform:scaleX(0.955);transform-origin:right center;">6.87</div><div class="a " style="top:713.90px;font-size:14px;line-height:17.5px;color:#222;font-weight:normal;right:1056px;text-align:right;transform:scaleX(0.955);transform-origin:right center;">6.95</div><div class="a " style="top:713.90px;font-size:14px;line-height:17.5px;color:#111;font-weight:bold;right:924px;text-align:right;transform:scaleX(0.94);transform-origin:right center;">12.10</div><div class="a " style="top:713.90px;font-size:14px;line-height:17.5px;color:#222;font-weight:normal;right:723.5px;text-align:right;transform:scaleX(0.8404);transform-origin:right center;">– (–)</div><div class="a" style="left:1214px;top:711px;width:72px;height:27px;background:#64ad59;border-radius:2px"></div><div class="a " style="top:716.37px;font-size:13px;line-height:16.25px;color:#fff;font-weight:bold;left:950px;width:600px;text-align:center;">Buy</div><svg class="a" style="left:1395px;top:712.5px;" width="19" height="21" viewBox="0 0 19 21"><path d="M1.2 1.2H12.5L17.6 6.3V19.8H1.2Z" fill="#fff" stroke="#4a3fc2" stroke-width="1.35" stroke-linejoin="round"/><path d="M12.5 1.2V6.3H17.6" fill="none" stroke="#4a3fc2" stroke-width="1.1"/><path d="M9.3 7.6C8.4 7.6 8.8 10.8 10 12.4C11.2 13.9 13.4 14.4 14.1 14C14.8 13.5 13.1 12.7 10.8 13.3C8.4 13.9 5.6 16.2 5.4 17C5.1 17.9 7 16.7 8.1 14.4C9.1 12.3 10.2 7.6 9.3 7.6Z" fill="none" stroke="#4a3fc2" stroke-width="1.05"/></svg><div class="a " style="top:713.90px;font-size:14px;line-height:17.5px;color:#4a3fc2;font-weight:normal;left:1419px;">14/11/2565</div><div class="a " style="top:713.90px;font-size:14px;line-height:17.5px;color:#222;font-weight:normal;left:1252.4px;width:600px;text-align:center;transform:scaleX(0.65);transform-origin:center center;">–</div><div class="a " style="top:765.90px;font-size:14px;line-height:17.5px;color:#222;font-weight:normal;left:323.5px;transform:scaleX(0.93);transform-origin:left center;">DBSV</div><div class="a " style="top:765.90px;font-size:14px;line-height:17.5px;color:#222;font-weight:normal;left:423.5px;transform:scaleX(0.965);transform-origin:left center;">สมบัติ เอกวรรณพัฒนา</div><div class="a " style="top:765.90px;font-size:14px;line-height:17.5px;color:#222;font-weight:normal;right:1252px;text-align:right;transform:scaleX(0.955);transform-origin:right center;">0.87</div><div class="a " style="top:765.90px;font-size:14px;line-height:17.5px;color:#222;font-weight:normal;right:1187px;text-align:right;transform:scaleX(0.955);transform-origin:right center;">0.78</div><div class="a " style="top:765.90px;font-size:14px;line-height:17.5px;color:#222;font-weight:normal;right:1121px;text-align:right;transform:scaleX(0.955);transform-origin:right center;">7.82</div><div class="a " style="top:765.90px;font-size:14px;line-height:17.5px;color:#222;font-weight:normal;right:1056px;text-align:right;transform:scaleX(0.955);transform-origin:right center;">8.39</div><div class="a " style="top:765.90px;font-size:14px;line-height:17.5px;color:#111;font-weight:bold;right:924px;text-align:right;transform:scaleX(0.94);transform-origin:right center;">11.27</div><div class="a " style="top:765.90px;font-size:14px;line-height:17.5px;color:#222;font-weight:normal;right:723.5px;text-align:right;transform:scaleX(0.8404);transform-origin:right center;">– (–)</div><div class="a" style="left:1214px;top:763px;width:72px;height:27px;background:#64ad59;border-radius:2px"></div><div class="a " style="top:768.37px;font-size:13px;line-height:16.25px;color:#fff;font-weight:bold;left:950px;width:600px;text-align:center;">Buy</div><div class="a " style="top:765.90px;font-size:14px;line-height:17.5px;color:#222;font-weight:normal;left:1401.5px;transform:scaleX(0.65);transform-origin:left center;">–</div><div class="a " style="top:765.90px;font-size:14px;line-height:17.5px;color:#222;font-weight:normal;left:1419.5px;">21/09/2565</div><div class="a " style="top:765.90px;font-size:14px;line-height:17.5px;color:#222;font-weight:normal;left:1252.4px;width:600px;text-align:center;transform:scaleX(0.65);transform-origin:center center;">–</div><div class="a " style="top:817.90px;font-size:14px;line-height:17.5px;color:#222;font-weight:normal;left:323.5px;transform:scaleX(0.93);transform-origin:left center;">YUANTA</div><div class="a " style="top:817.90px;font-size:14px;line-height:17.5px;color:#222;font-weight:normal;left:423.5px;transform:scaleX(0.965);transform-origin:left center;">Jaruchart Buchachart</div><div class="a " style="top:817.90px;font-size:14px;line-height:17.5px;color:#222;font-weight:normal;right:1252px;text-align:right;transform:scaleX(0.955);transform-origin:right center;">0.99</div><div class="a " style="top:817.90px;font-size:14px;line-height:17.5px;color:#222;font-weight:normal;right:1187px;text-align:right;transform:scaleX(0.955);transform-origin:right center;">0.90</div><div class="a " style="top:817.90px;font-size:14px;line-height:17.5px;color:#222;font-weight:normal;right:1121px;text-align:right;transform:scaleX(0.955);transform-origin:right center;">7.47</div><div class="a " style="top:817.90px;font-size:14px;line-height:17.5px;color:#222;font-weight:normal;right:1056px;text-align:right;transform:scaleX(0.955);transform-origin:right center;">8.05</div><div class="a " style="top:817.90px;font-size:14px;line-height:17.5px;color:#111;font-weight:bold;right:924px;text-align:right;transform:scaleX(0.94);transform-origin:right center;">11.60</div><div class="a " style="top:817.90px;font-size:14px;line-height:17.5px;color:#222;font-weight:normal;right:723.5px;text-align:right;transform:scaleX(0.8404);transform-origin:right center;">– (–)</div><div class="a" style="left:1214px;top:815px;width:72px;height:27px;background:#64ad59;border-radius:2px"></div><div class="a " style="top:820.37px;font-size:13px;line-height:16.25px;color:#fff;font-weight:bold;left:950px;width:600px;text-align:center;">Buy</div><svg class="a" style="left:1395px;top:816.5px;" width="19" height="21" viewBox="0 0 19 21"><path d="M1.2 1.2H12.5L17.6 6.3V19.8H1.2Z" fill="#fff" stroke="#4a3fc2" stroke-width="1.35" stroke-linejoin="round"/><path d="M12.5 1.2V6.3H17.6" fill="none" stroke="#4a3fc2" stroke-width="1.1"/><path d="M9.3 7.6C8.4 7.6 8.8 10.8 10 12.4C11.2 13.9 13.4 14.4 14.1 14C14.8 13.5 13.1 12.7 10.8 13.3C8.4 13.9 5.6 16.2 5.4 17C5.1 17.9 7 16.7 8.1 14.4C9.1 12.3 10.2 7.6 9.3 7.6Z" fill="none" stroke="#4a3fc2" stroke-width="1.05"/></svg><div class="a " style="top:817.90px;font-size:14px;line-height:17.5px;color:#4a3fc2;font-weight:normal;left:1419px;">16/09/2565</div><svg class="a" style="left:1542px;top:817.5px;" width="19" height="21" viewBox="0 0 19 21"><path d="M1.2 1.2H12.5L17.6 6.3V19.8H1.2Z" fill="#fff" stroke="#4a3fc2" stroke-width="1.35" stroke-linejoin="round"/><path d="M12.5 1.2V6.3H17.6" fill="none" stroke="#4a3fc2" stroke-width="1.1"/><path d="M9.3 7.6C8.4 7.6 8.8 10.8 10 12.4C11.2 13.9 13.4 14.4 14.1 14C14.8 13.5 13.1 12.7 10.8 13.3C8.4 13.9 5.6 16.2 5.4 17C5.1 17.9 7 16.7 8.1 14.4C9.1 12.3 10.2 7.6 9.3 7.6Z" fill="none" stroke="#4a3fc2" stroke-width="1.05"/></svg><div class="a" style="left:316px;top:855px;width:1272px;height:17px;background:#f6f7f9;"></div><div class="a" style="left:661px;top:859px;width:923px;height:9px;background:#c4c4c4;border-radius:5px"></div><div class="a" style="left:1021px;top:325px;width:191px;height:534px;background:transparent;border:5px solid #e41d27"></div><div class="a" style="left:1363px;top:329px;width:237px;height:529px;background:transparent;border:5px solid #09a2e3"></div><div class="a " style="top:891.88px;font-size:13.5px;line-height:16.88px;color:#8a909a;font-weight:normal;left:316px;transform:scaleX(0.9754);transform-origin:left center;">* ข้อมูลที่แสดงเป็นข้อมูลประมาณการในช่วง 90 วันย้อนหลัง</div><div class="a" style="left:316px;top:933px;width:1271px;height:58px;background:#f7f7f7;border-radius:6px"></div><div class="a " style="top:950.98px;font-size:17px;line-height:21.25px;color:#252c4c;font-weight:bold;left:336px;transform:scaleX(0.9581);transform-origin:left center;">Recommendation Type</div><div class="a" style="left:648px;top:951px;width:20px;height:20px;background:#64ad59;border-radius:4px"></div><div class="a " style="top:953.42px;font-size:14.5px;line-height:18.12px;color:#222;font-weight:normal;left:675.8px;transform:scaleX(0.9680);transform-origin:left center;">Buy</div><div class="a" style="left:805px;top:951px;width:20px;height:20px;background:#c89e38;border-radius:4px"></div><div class="a " style="top:953.42px;font-size:14.5px;line-height:18.12px;color:#222;font-weight:normal;left:833px;transform:scaleX(0.9722);transform-origin:left center;">Hold</div><div class="a" style="left:962px;top:951px;width:20px;height:20px;background:#cf4545;border-radius:4px"></div><div class="a " style="top:953.42px;font-size:14.5px;line-height:18.12px;color:#222;font-weight:normal;left:990.4px;transform:scaleX(0.9468);transform-origin:left center;">Sell</div><div class="a" style="left:0px;top:1023px;width:1903px;height:16px;background:#f3f5f4;"></div><div class="a" style="left:0px;top:1039px;width:1903px;height:1px;background:#ffffff;"></div><div class="a" style="left:0px;top:1040px;width:1922px;height:2px;background:#2b2b23;"></div><div class="a" style="left:293px;top:1040px;width:48px;height:2px;background:#5f5f57;"></div><div class="a" style="left:391px;top:1040px;width:48px;height:2px;background:#b8692a;"></div><div class="a" style="left:0px;top:103px;width:1903px;height:70px;background:#fff;box-shadow:0 3px 6px rgba(0,0,0,.07)"></div><div class="a " style="top:113.41px;font-size:32px;line-height:40.0px;color:#231f20;font-weight:bold;left:47.5px;transform:scaleX(1.1132);transform-origin:left center;letter-spacing:-0.3px">set<span style="color:#6cb33f">t</span><span style="font-weight:normal">rade</span></div><div class="a " style="top:146.80px;font-size:10.5px;line-height:13.12px;color:#231f20;font-weight:normal;left:48px;letter-spacing:2.95px">www.settrade.com</div><div class="a " style="top:128.83px;font-size:15px;line-height:18.75px;color:#252c4c;font-weight:normal;left:263.3px;transform:scaleX(0.8850);transform-origin:left center;-webkit-text-stroke:0.5px #252c4c">หุ้น</div><div class="a " style="top:128.83px;font-size:15px;line-height:18.75px;color:#252c4c;font-weight:normal;left:320px;transform:scaleX(0.9562);transform-origin:left center;-webkit-text-stroke:0.5px #252c4c">อนุพันธ์</div><div class="a " style="top:128.83px;font-size:15px;line-height:18.75px;color:#252c4c;font-weight:normal;left:404.8px;transform:scaleX(0.9099);transform-origin:left center;-webkit-text-stroke:0.5px #252c4c">กองทุนรวม</div><div class="a " style="top:128.83px;font-size:15px;line-height:18.75px;color:#252c4c;font-weight:normal;left:508.9px;transform:scaleX(0.8494);transform-origin:left center;-webkit-text-stroke:0.5px #252c4c">บทวิเคราะห์</div><div class="a " style="top:128.83px;font-size:15px;line-height:18.75px;color:#252c4c;font-weight:normal;left:614.1px;transform:scaleX(0.9004);transform-origin:left center;-webkit-text-stroke:0.5px #252c4c">ข่าวสาร/บทความ</div><div class="a " style="top:128.83px;font-size:15px;line-height:18.75px;color:#252c4c;font-weight:normal;left:753.2px;transform:scaleX(0.9147);transform-origin:left center;-webkit-text-stroke:0.5px #252c4c">บริการ/เครื่องมือ</div><div class="a" style="left:1304px;top:103px;width:1px;height:70px;background:#e6e8eb;"></div><div class="a" style="left:1514px;top:103px;width:1px;height:70px;background:#e6e8eb;"></div><div class="a" style="left:1612px;top:103px;width:1px;height:70px;background:#e6e8eb;"></div><svg class="a" style="left:1322px;top:130px;" width="17" height="17" viewBox="0 0 17 17"><circle cx="7" cy="7" r="6" fill="none" stroke="#555" stroke-width="1.6"/><path d="M11.3 11.3L16 16" stroke="#555" stroke-width="1.6" stroke-linecap="round"/></svg><div class="a " style="top:128.93px;font-size:15px;line-height:18.75px;color:#6f737c;font-weight:normal;left:1347.5px;transform:scaleX(0.9048);transform-origin:left center;">Search Quote, Keyword</div><div class="a " style="top:128.43px;font-size:15px;line-height:18.75px;color:#1e2440;font-weight:normal;left:1532.7px;transform:scaleX(0.8640);transform-origin:left center;">ค้นหาชื่อย่อ</div><svg class="a" style="left:1639px;top:130px;" width="19" height="19" viewBox="0 0 19 19"><rect x="1" y="1" width="7" height="7" rx="2.2" fill="none" stroke="#444" stroke-width="1.7"/><rect x="11" y="1" width="7" height="7" rx="2.2" fill="none" stroke="#444" stroke-width="1.7"/><rect x="1" y="11" width="7" height="7" rx="2.2" fill="none" stroke="#444" stroke-width="1.7"/><rect x="11" y="11" width="7" height="7" rx="2.2" fill="none" stroke="#444" stroke-width="1.7"/></svg><div class="a" style="left:1683px;top:103px;width:68px;height:70px;background:linear-gradient(225deg,#4a67a2 0%,#364b85 50%,#263064 100%);"></div><svg class="a" style="left:1707px;top:127px;" width="21" height="22" viewBox="0 0 21 22"><path d="M9 1.6H18.6L19.8 6H12.2L10.6 14.2L7.6 13.2Q5.6 12.3 6 10L7 4.6Q7.6 1.6 9 1.6Z" fill="#fff"/><path d="M0.6 16.4H8.6L10.2 9L13.4 10Q15.7 11 15.4 13.2L14.5 18.4Q14 21 11.5 21H2.2Z" fill="#fff"/></svg><div class="a" style="left:1751px;top:103px;width:152px;height:70px;background:#72c43a;"></div><svg class="a" style="left:1775px;top:128px;" width="16" height="21" viewBox="0 0 16 21"><path d="M3.5 9V6A4.5 4.5 0 0 1 12.5 6V9" fill="none" stroke="#fff" stroke-width="2.6"/><rect x="0.5" y="9" width="15" height="12" rx="1.5" fill="#fff"/><rect x="7" y="13" width="2.2" height="4" fill="#72c43a"/></svg><div class="a " style="top:128.93px;font-size:15px;line-height:18.75px;color:#fff;font-weight:bold;left:1799px;transform:scaleX(0.8805);transform-origin:left center;">SET Member</div><div class="a" style="left:1903px;top:103px;width:16px;height:936px;background:#f1f1f1;"></div><div class="a" style="left:1919px;top:103px;width:1px;height:937px;background:#ffffff;"></div><div class="a" style="left:1903px;top:1039px;width:17px;height:1px;background:#ffffff;"></div><div class="a" style="left:1920px;top:103px;width:2px;height:625px;background:#ececec;"></div><div class="a" style="left:1920px;top:728px;width:2px;height:314px;background:#2b2b23;"></div><div class="a" style="left:1903px;top:1040px;width:19px;height:2px;background:#2b2b23;"></div><svg class="a" style="left:1907px;top:110px;" width="8" height="5" viewBox="0 0 8 5"><path d="M0 5L4 0L8 5Z" fill="#505050"/></svg><div class="a" style="left:1905px;top:444px;width:13px;height:272px;background:#c1c1c1;"></div><svg class="a" style="left:1907px;top:1028px;" width="8" height="5" viewBox="0 0 8 5"><path d="M0 0L8 0L4 5Z" fill="#505050"/></svg><div class="a" style="left:1827px;top:890px;width:56px;height:56px;border-radius:50%;background:#e8b443;border:2px solid #fff;box-shadow:0 2px 10px rgba(0,0,0,.18)"></div><svg class="a" style="left:1827px;top:890px;" width="56" height="56" viewBox="0 0 56 56"><path d="M11 27C10 9 46 8 46 26" fill="none" stroke="#2b2b2b" stroke-width="1.9"/><path d="M5.5 20.5L13.5 17L14.5 25Z" fill="#efe6c3" stroke="#7a6a4a" stroke-width="0.6"/><path d="M50.5 19.5L42.5 16L41.5 24Z" fill="#efe6c3" stroke="#7a6a4a" stroke-width="0.6"/><ellipse cx="12.5" cy="25.5" rx="3" ry="4.2" fill="#4e3820"/><ellipse cx="43.5" cy="25" rx="3" ry="4.2" fill="#4e3820"/><ellipse cx="28" cy="31" rx="15.5" ry="15" fill="#80613f"/><ellipse cx="28" cy="22" rx="7" ry="6" fill="#8e6d48"/><path d="M25.5 17Q28 11 31.5 16Z" fill="#80613f"/><path d="M17.5 23.5L24.5 25M38.5 23.5L31.5 25" stroke="#3a2a18" stroke-width="1.3"/><ellipse cx="22" cy="28" rx="3" ry="3.2" fill="#f4f1ea"/><ellipse cx="34" cy="28" rx="3" ry="3.2" fill="#f4f1ea"/><circle cx="22.6" cy="28.4" r="1.7" fill="#2a3a5a"/><circle cx="33.4" cy="28.4" r="1.7" fill="#2a3a5a"/><ellipse cx="28" cy="37.5" rx="12.5" ry="7.5" fill="#d9a865"/><ellipse cx="23.5" cy="34" rx="1.4" ry="1.1" fill="#4e3820"/><ellipse cx="32.5" cy="34" rx="1.4" ry="1.1" fill="#4e3820"/><path d="M19.5 38.5Q28 44.5 37 38.5Q28 40.5 19.5 38.5Z" fill="#e0652a" stroke="#8a3a1a" stroke-width="0.6"/><path d="M45 27Q47 38 37.5 41" fill="none" stroke="#2b2b2b" stroke-width="1.4"/><ellipse cx="37" cy="41" rx="2.2" ry="1.5" fill="#333"/></svg><div class="a" style="left:1875px;top:882px;width:15px;height:15px;background:#1c1c1c;border-radius:50%"></div><svg class="a" style="left:1879px;top:886px;" width="7" height="7" viewBox="0 0 7 7"><path d="M0.5 0.5L6.5 6.5M6.5 0.5L0.5 6.5" stroke="#fff" stroke-width="1.5"/></svg><div class="a" style="left:1828px;top:953px;width:54px;height:54px;background:#263157;border-radius:50%"></div><svg class="a" style="left:1842px;top:968px;" width="28" height="28" viewBox="0 0 28 28"><path d="M16 24.5H1.5V1.5H23.5V14" fill="none" stroke="#fff" stroke-width="1.8" stroke-linejoin="round"/><path d="M6.5 7.3H7.5M10 7.3H18.5M6.5 12H7.5M10 12H18.5M6.5 16.7H7.5M10 16.7H13" stroke="#fff" stroke-width="1.8"/><path d="M22 16L23.8 19.4L27.5 19.8L24.8 22.3L25.5 26L22 24.2L18.5 26L19.2 22.3L16.5 19.8L20.2 19.4Z" fill="#62c23a"/></svg>
</body></html>
